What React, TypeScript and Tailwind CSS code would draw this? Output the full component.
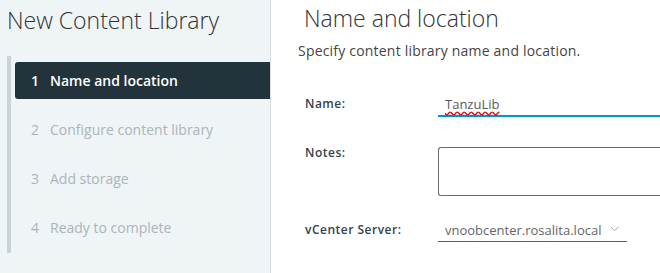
import React from "react";

const font = { fontFamily: "'Open Sans', sans-serif" };

export default function App() {
  const steps = [
    { n: "1", label: "Name and location", active: true },
    { n: "2", label: "Configure content library" },
    { n: "3", label: "Add storage" },
    { n: "4", label: "Ready to complete" },
  ];
  return (
    <div className="flex w-[660px] h-[273px] overflow-hidden bg-white" style={font}>
      <div className="w-[271px] shrink-0 bg-[#eff4f7] border-r border-[#d7dde1] flex flex-col">
        <div className="pl-[7px] pt-[5px] text-[23px] font-light text-[#333] leading-[30px]">
          New Content Library
        </div>
        <div className="mt-[21px] ml-[7px] border-l-[4px] border-[#c9d3d9] h-[197px] pt-[6px] pl-[4px] flex flex-col">
          {steps.map((s) =>
            s.active ? (
              <div
                key={s.n}
                className="h-[37px] bg-[#23333c] rounded-l-[3px] flex items-center text-white font-semibold text-[14px]"
              >
                <span className="w-[35px] text-right pr-[11px]">{s.n}</span>
                <span>{s.label}</span>
              </div>
            ) : (
              <div
                key={s.n}
                className="h-[37px] mt-[12px] flex items-center text-[#acb4b9] text-[14px]"
              >
                <span className="w-[35px] text-right pr-[11px]">{s.n}</span>
                <span>{s.label}</span>
              </div>
            )
          )}
        </div>
      </div>
      <div className="flex-1 flex flex-col">
        <div className="pl-[33px] pt-[3px] text-[23px] font-light text-[#333] leading-[30px]">
          Name and location
        </div>
        <div className="pl-[27px] mt-[8px] text-[14px] tracking-[0.2px] text-[#444] leading-[20px]">
          Specify content library name and location.
        </div>
        <div className="flex items-start mt-[31px]">
          <div className="w-[167px] pl-[34px] pt-[3px] text-[12px] tracking-[0.5px] font-semibold text-[#314350]">Name:</div>
          <div className="flex-1 border-b-2 border-[#0094d2] h-[25px] pl-[7px] pt-[3px] text-[13px] text-[#5a5a5a] leading-[18px]">
            <span className="underline decoration-wavy decoration-red-600 underline-offset-[2px]">TanzuLib</span>
          </div>
        </div>
        <div className="flex items-start mt-[30px]">
          <div className="w-[167px] pl-[34px] -mt-[3px] text-[12px] tracking-[0.5px] font-semibold text-[#314350]">Notes:</div>
          <div className="flex-1 h-[49px] border border-[#6c6c6c] rounded-l-[3px] border-r-0"></div>
        </div>
        <div className="flex items-start mt-[22px]">
          <div className="w-[167px] pl-[34px] pt-[3px] text-[12px] tracking-[0.5px] font-semibold text-[#314350]">vCenter Server:</div>
          <div className="w-[189px] border-b border-[#4d6575] h-[24px] pl-[7px] pt-[3px] flex items-start text-[13px] text-[#666] leading-[18px]">
            <span>vnoobcenter.rosalita.local</span>
            <svg className="ml-[9px] mt-[5px]" width="9" height="6" viewBox="0 0 9 6">
              <path d="M0.5 0.8 L4.5 4.8 L8.5 0.8" fill="none" stroke="#9aa6ae" strokeWidth="1" />
            </svg>
          </div>
        </div>
      </div>
    </div>
  );
}
